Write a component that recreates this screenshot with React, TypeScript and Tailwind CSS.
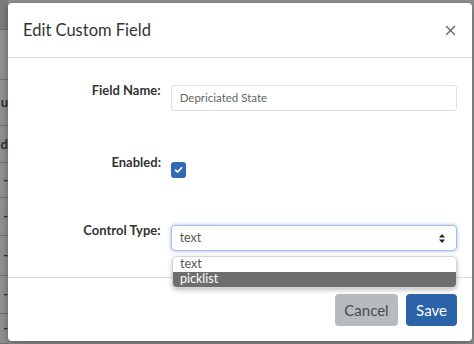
import React from 'react';

const stripRows = [
  { h: 'h-[30px]', bg: 'bg-[#7b7b7b]', mark: '' },
  { h: 'h-[50px]', bg: 'bg-[#8e8e8e]', mark: '' },
  { h: 'h-[46px]', bg: 'bg-[#8e8e8e]', mark: 'u' },
  { h: 'h-[37px]', bg: 'bg-[#8e8e8e]', mark: 'd' },
  { h: 'h-[35px]', bg: 'bg-[#8e8e8e]', mark: '-' },
  { h: 'h-[38px]', bg: 'bg-[#8e8e8e]', mark: '-' },
  { h: 'h-[40px]', bg: 'bg-[#8e8e8e]', mark: '-' },
  { h: 'h-[38px]', bg: 'bg-[#8e8e8e]', mark: '-' },
  { h: 'h-[30px]', bg: 'bg-[#8e8e8e]', mark: '-' },
];

const BackdropStrip: React.FC = () => (
  <div className="w-[8px] shrink-0 flex flex-col">
    {stripRows.map((r, i) => (
      <div
        key={i}
        className={`${r.h} ${r.bg} border-b border-[#6f6f6f] flex items-center justify-end overflow-hidden text-[13px] leading-none text-[#2e2e2e] font-bold`}
      >
        {r.mark}
      </div>
    ))}
  </div>
);

const App: React.FC = () => {
  return (
    <div
      className="w-[474px] h-[344px] bg-[#8e8e8e] flex overflow-hidden"
      style={{ fontFamily: 'Lato, "Open Sans", sans-serif' }}
    >
      <BackdropStrip />

      {/* modal */}
      <div className="mt-[3px] w-[464px] h-[338px] bg-white rounded-[4px] shadow-[0_2px_6px_rgba(0,0,0,0.35)] flex flex-col relative">
        {/* header */}
        <div className="h-[55px] shrink-0 border-b border-[#dcdcdc] flex items-center justify-between pl-[15px] pr-[16px]">
          <h2 className="text-[16.5px] text-[#333] leading-none pt-[1px]">Edit Custom Field</h2>
          <svg width="11" height="11" viewBox="0 0 11 11" className="mt-[1px]">
            <path d="M1.5 1.5 L9.5 9.5 M9.5 1.5 L1.5 9.5" stroke="#666" strokeWidth="1.4" strokeLinecap="round" />
          </svg>
        </div>

        {/* body */}
        <div className="flex-1 flex flex-col pt-[24px] pr-[15px] gap-[43px]">
          <div className="flex gap-[10px]">
            <label className="w-[153px] text-right text-[13px] font-bold text-[#333] leading-[16px]">
              Field Name:
            </label>
            <div className="mt-[3px] w-[287px] h-[26px] border border-[#dedede] rounded-[3px] flex items-center px-[8px] text-[11.5px] text-[#666]">
              Depriciated State
            </div>
          </div>

          <div className="flex gap-[10px]">
            <label className="w-[153px] text-right text-[13px] font-bold text-[#333] leading-[16px]">
              Enabled:
            </label>
            <div className="mt-[8px] w-[15px] h-[16px] rounded-[3px] bg-[#2f6cb4] flex items-center justify-center">
              <svg width="9" height="8" viewBox="0 0 9 8">
                <path d="M1.5 4.2 L3.6 6 L7.5 1.8" stroke="#fff" strokeWidth="1.7" fill="none" strokeLinecap="round" strokeLinejoin="round" />
              </svg>
            </div>
          </div>

          <div className="flex gap-[10px] mt-[1px]">
            <label className="w-[153px] text-right text-[13px] font-bold text-[#333] leading-[16px]">
              Control Type:
            </label>
            <div className="mt-[3px] w-[287px] h-[26px] border border-[#9fbfe6] rounded-[4px] shadow-[0_0_3px_1px_rgba(120,160,220,0.45)] flex items-center justify-between pl-[8px] pr-[10px] text-[12.5px] text-[#555]">
              <span>text</span>
              <svg width="8" height="11" viewBox="0 0 8 11">
                <path d="M4 1 L7 4.5 H1 Z M4 10 L7 6.5 H1 Z" fill="#222" />
              </svg>
            </div>
          </div>
        </div>

        {/* footer */}
        <div className="h-[64px] shrink-0 border-t border-[#dcdcdc] flex justify-end items-start pt-[16px] pr-[15px] gap-[8px]">
          <button className="w-[63px] h-[32px] rounded-[4px] bg-[#b7bbbf] text-[#4a4a4a] text-[15px]">
            Cancel
          </button>
          <button className="w-[51px] h-[32px] rounded-[4px] bg-[#2b63a8] text-white text-[15px]">
            Save
          </button>
        </div>

        {/* open select list */}
        <div className="absolute left-[164px] top-[253px] w-[285px] rounded-[5px] border border-[#d4d4d4] bg-white shadow-[0_2px_5px_rgba(0,0,0,0.25)] overflow-hidden text-[12.5px]">
          <div className="h-[15px] flex items-center px-[7px] text-[#555]">text</div>
          <div className="h-[15px] flex items-center px-[7px] bg-[#6e6e6e] text-white">picklist</div>
        </div>
      </div>
    </div>
  );
};

export default App;
